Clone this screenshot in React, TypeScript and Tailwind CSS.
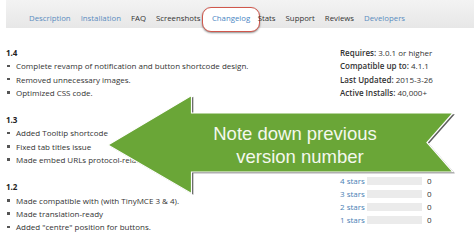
import React from "react";

const tabs: { label: string; color: string; active?: boolean }[] = [
  { label: "Description", color: "text-[#5a8cc0]" },
  { label: "Installation", color: "text-[#5a8cc0]" },
  { label: "FAQ", color: "text-[#333]" },
  { label: "Screenshots", color: "text-[#333]" },
  { label: "Changelog", color: "text-[#4a86c4]", active: true },
  { label: "Stats", color: "text-[#333]" },
  { label: "Support", color: "text-[#333]" },
  { label: "Reviews", color: "text-[#333]" },
  { label: "Developers", color: "text-[#5a8cc0]" },
];

const sections = [
  {
    v: "1.4",
    items: [
      "Complete revamp of notification and button shortcode design.",
      "Removed unnecessary images.",
      "Optimized CSS code.",
    ],
  },
  {
    v: "1.3",
    items: ["Added Tooltip shortcode", "Fixed tab titles issue", "Made embed URLs protocol-relative"],
  },
  {
    v: "1.2",
    items: [
      "Made compatible with (with TinyMCE 3 & 4).",
      "Made translation-ready",
      'Added "centre" position for buttons.',
    ],
  },
];

const meta = [
  ["Requires:", "3.0.1 or higher"],
  ["Compatible up to:", "4.1.1"],
  ["Last Updated:", "2015-3-26"],
  ["Active Installs:", "40,000+"],
];

export default function App() {
  const pts = "108,145 191.5,95.5 191.5,113 453,113 427,142.5 453,172 191.5,172 191.5,193.5";
  return (
    <div className="relative w-[474px] h-[241px] overflow-hidden bg-white font-['Open_Sans',sans-serif] text-[8px] text-[#333]">
      <div className="ml-[6px] h-[28px] bg-gradient-to-b from-[#f3f3f3] to-[#e7e7e7] flex items-center pt-[10px] pl-[23px] gap-[10px] text-[7.8px]">
        {tabs.map((t) =>
          t.active ? (
            <div
              key={t.label}
              className={`ml-[-8px] mr-[-12px] h-[25px] flex items-center px-[8.5px] bg-white border-[1.5px] border-[#d0574c] rounded-[9px] shadow-[0_1px_2px_rgba(0,0,0,0.45)] ${t.color}`}
            >
              {t.label}
            </div>
          ) : (
            <span key={t.label} className={t.color}>
              {t.label}
            </span>
          )
        )}
      </div>

      <div className="flex pt-[18px]">
        <div className="w-[340px] pl-[6px]">
          {sections.map((s, i) => (
            <div key={s.v} className={i > 0 ? "mt-[14px]" : ""}>
              <div className="font-bold text-[#222] leading-[13.3px]">{s.v}</div>
              {s.items.map((it) => (
                <div key={it} className="flex items-center leading-[13.3px] h-[13.3px]">
                  <span className="ml-[1px] mr-[6.5px] w-[2.5px] h-[2.5px] bg-[#555] shrink-0" />
                  <span className="whitespace-nowrap">{it}</span>
                </div>
              ))}
            </div>
          ))}
        </div>

        <div className="flex-1">
          {meta.map(([k, v]) => (
            <div key={k} className="leading-[13.3px] h-[13.3px] whitespace-nowrap">
              <span className="font-semibold text-[#333]">{k}</span> {v}
            </div>
          ))}
          <div className="mt-[75px]">
            {["4", "3", "2", "1"].map((n) => (
              <div key={n} className="flex items-center h-[13px]">
                <span className="w-[27px] text-[#4a7fb5] whitespace-nowrap">{n} stars</span>
                <span className="w-[55px] h-[8px] bg-[#ebebeb]" />
                <span className="ml-[5px]">0</span>
              </div>
            ))}
          </div>
        </div>
      </div>

      <svg className="absolute left-0 top-0 pointer-events-none" width="474" height="241" viewBox="0 0 474 241">
        <polygon points={pts} fill="#5e5e5e" transform="translate(1.8,1.2)" />
        <polygon points={pts} fill="#6aa637" stroke="#ffffff" strokeWidth="1.2" strokeLinejoin="miter" />
        <text
          x="295"
          y="140"
          textAnchor="middle"
          fill="#f4f8ee"
          fontFamily="'Liberation Sans', Arial, sans-serif"
          fontSize="18.5"
        >
          Note down previous
        </text>
        <text
          x="300"
          y="163"
          textAnchor="middle"
          fill="#f4f8ee"
          fontFamily="'Liberation Sans', Arial, sans-serif"
          fontSize="18.5"
        >
          version number
        </text>
      </svg>
    </div>
  );
}
